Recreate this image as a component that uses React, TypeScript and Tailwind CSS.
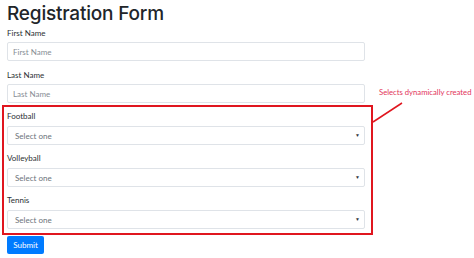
function Field({ label, placeholder }: { label: string; placeholder: string }) {
  return (
    <div className="mb-[9px]">
      <label className="block text-[8px] leading-[10px] mb-[4px] text-[#2b2f33]">{label}</label>
      <input
        placeholder={placeholder}
        className="block w-full h-[19px] px-[5px] text-[8px] rounded-[2px] border border-[#dfe3e8] bg-white text-[#495057] placeholder:text-[#868d94] outline-none"
      />
    </div>
  );
}

function SelectField({ label }: { label: string }) {
  return (
    <div className="mb-[8px] last:mb-0">
      <label className="block text-[8px] leading-[10px] mb-[5px] text-[#2b2f33]">{label}</label>
      <div className="relative h-[19px] rounded-[2px] border border-[#dfe3e8] bg-white flex items-center pl-[7px] text-[8px] text-[#6c737a]">
        Select one
        <span className="absolute right-[4px] top-1/2 -translate-y-1/2 text-[5px] text-[#343a40]">▼</span>
      </div>
    </div>
  );
}

export default function App() {
  return (
    <div className="relative w-[474px] h-[258px] bg-white overflow-hidden" style={{ fontFamily: 'Lato, "Noto Sans", sans-serif' }}>
      <div className="ml-[7px] w-[358px]">
        <h1 className="text-[19px] leading-[28px] font-medium text-[#212529] tracking-[-0.2px]" style={{ fontFamily: 'Inter, sans-serif' }}>
          Registration Form
        </h1>
        <Field label="First Name" placeholder="First Name" />
        <Field label="Last Name" placeholder="Last Name" />
        <div className="-ml-[5px] -mt-[7px] w-[371px] border-2 border-[#e0161f] pl-[3px] pr-[6px] pt-[4px] pb-[4px]">
          <SelectField label="Football" />
          <SelectField label="Volleyball" />
          <SelectField label="Tennis" />
        </div>
        <button className="block mt-[1px] h-[18px] w-[37px] rounded-[2px] bg-[#007bff] text-white text-[8px]">Submit</button>
      </div>

      <span className="absolute left-[379px] top-[87px] text-[7.7px] leading-[10px] text-[#e2345a] whitespace-nowrap">
        Selects dynamically created
      </span>
      <svg className="absolute left-0 top-0" width="474" height="258">
        <line x1="373" y1="122" x2="402" y2="103" stroke="#e0161f" strokeWidth="1.5" />
      </svg>
    </div>
  );
}
